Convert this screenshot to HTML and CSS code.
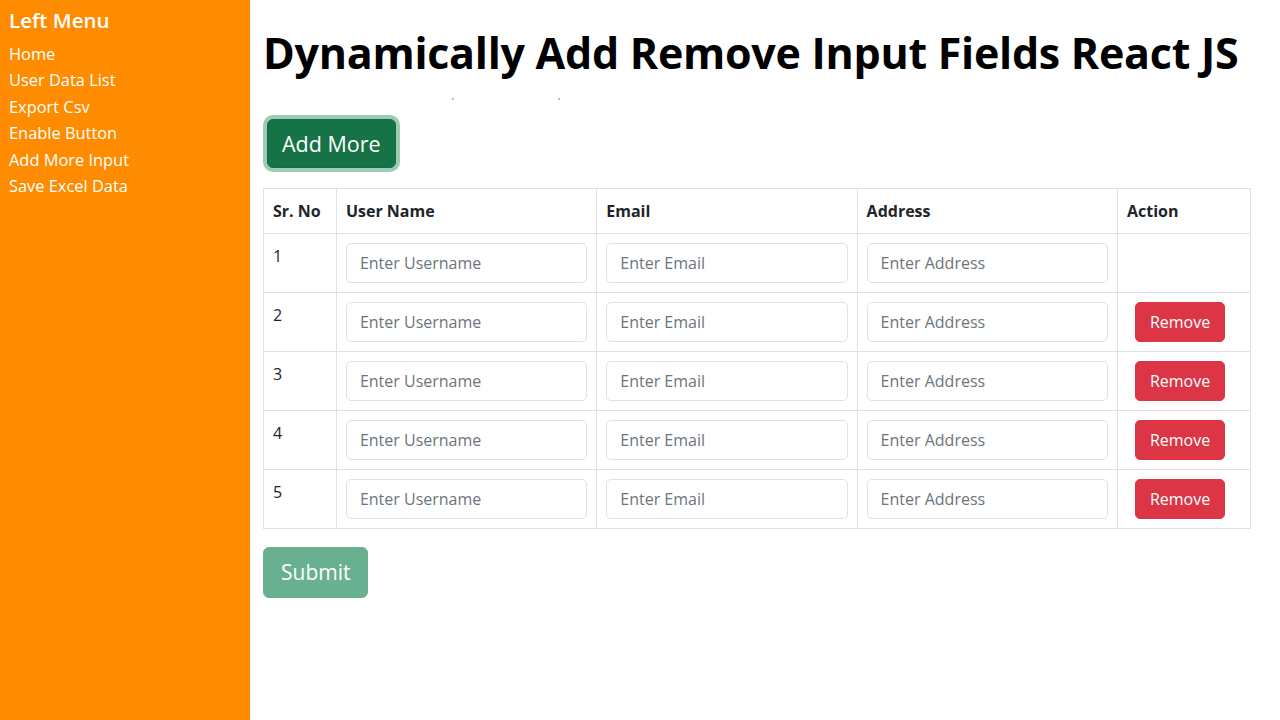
FILE: index.html
```html
<!DOCTYPE html>
<html lang="en">
<head>
<meta charset="utf-8">
<title>Dynamically Add Remove Input Fields React JS</title>
<link rel="stylesheet" href="styles.css">
</head>
<body>
<div class="app">
  <aside class="sidebar">
    <h3 class="side-title">Left Menu</h3>
    <ul class="side-menu">
      <li>Home</li>
      <li>User Data List</li>
      <li>Export Csv</li>
      <li>Enable Button</li>
      <li>Add More Input</li>
      <li>Save Excel Data</li>
    </ul>
  </aside>
  <main class="content">
    <h1 class="page-title">Dynamically Add Remove Input Fields React JS</h1>
    <div class="dots"><span class="dot"></span><span class="dot"></span></div>
    <div class="add-wrap"><button class="btn btn-add">Add More</button></div>
    <table class="grid">
      <thead>
        <tr><th class="c-no">Sr. No</th><th class="c-in">User Name</th><th class="c-in">Email</th><th class="c-in">Address</th><th class="c-act">Action</th></tr>
      </thead>
      <tbody>
        <tr><td>1</td><td><input class="field" placeholder="Enter Username"></td><td><input class="field" placeholder="Enter Email"></td><td><input class="field" placeholder="Enter Address"></td><td class="act"></td></tr>
        <tr><td>2</td><td><input class="field" placeholder="Enter Username"></td><td><input class="field" placeholder="Enter Email"></td><td><input class="field" placeholder="Enter Address"></td><td class="act"><button class="btn btn-remove">Remove</button></td></tr>
        <tr><td>3</td><td><input class="field" placeholder="Enter Username"></td><td><input class="field" placeholder="Enter Email"></td><td><input class="field" placeholder="Enter Address"></td><td class="act"><button class="btn btn-remove">Remove</button></td></tr>
        <tr><td>4</td><td><input class="field" placeholder="Enter Username"></td><td><input class="field" placeholder="Enter Email"></td><td><input class="field" placeholder="Enter Address"></td><td class="act"><button class="btn btn-remove">Remove</button></td></tr>
        <tr><td>5</td><td><input class="field" placeholder="Enter Username"></td><td><input class="field" placeholder="Enter Email"></td><td><input class="field" placeholder="Enter Address"></td><td class="act"><button class="btn btn-remove">Remove</button></td></tr>
      </tbody>
    </table>
    <button class="btn btn-submit" disabled>Submit</button>
  </main>
</div>
</body>
</html>
```
FILE: styles.css
```css
* { box-sizing: border-box; }
html, body { margin: 0; padding: 0; height: 100%; }
body {
  font-family: "Open Sans", "Noto Sans", sans-serif;
  color: #212529;
  background: #fff;
}
.app { display: flex; min-height: 720px; }
.sidebar {
  width: 250px;
  flex: 0 0 250px;
  background: #ff8c00;
  color: #fff;
  padding: 6px 9px;
}
.side-title {
  margin: 0 0 7px;
  font-size: 20.5px;
  font-weight: 600;
  line-height: 28px;
}
.side-menu { list-style: none; margin: 0; padding: 0; }
.side-menu li { font-size: 16.4px; line-height: 26.4px; }
.content { flex: 1; padding: 20px 29px 0 13px; }
.page-title {
  margin: 0;
  font-size: 43px;
  font-weight: 700;
  line-height: 66px;
  letter-spacing: -0.27px;
  color: #000;
}
.dots { height: 24px; position: relative; }
.dot { position: absolute; top: 12px; width: 2px; height: 2px; background: #bbb; }
.dot:first-child { left: 189px; }
.dot:last-child { left: 295px; }
.add-wrap { padding: 9px 0 20px; }
.btn {
  font-family: inherit;
  border: 1px solid transparent;
  color: #fff;
  cursor: pointer;
}
.btn-add {
  background: #157347;
  border-color: #146c43;
  font-size: 21.5px;
  line-height: 31px;
  padding: 8px 14px 8px;
  border-radius: 6px;
  box-shadow: 0 0 0 4px rgba(60,153,110,.5);
  margin-left: 4px;
  display: block;
}
.grid {
  width: 988px;
  border-collapse: collapse;
  margin-bottom: 18px;
}
.grid th, .grid td {
  border: 1px solid #dee2e6;
  text-align: left;
  vertical-align: top;
}
.grid th {
  font-size: 16px;
  font-weight: 700;
  padding: 10px 9px 10px;
  line-height: 24px;
  height: 45px;
}
.grid td { padding: 9px 9px 9px; font-size: 16px; line-height: 24px; height: 59px; }
.grid td:first-child { padding-top: 10px; }
.c-no { width: 73px; }
.c-in { width: 261px; }
.c-act { width: 133px; }
.field {
  display: block;
  width: 100%;
  height: 40px;
  border: 1px solid #dee2e6;
  border-radius: 5px;
  padding: 6px 13px;
  font-family: inherit;
  font-size: 16px;
  color: #212529;
  background: #fff;
}
.field::placeholder { color: #6c757d; }
.grid td.act { padding-left: 17px; }
.btn-remove {
  background: #dc3545;
  border-color: #dc3545;
  font-size: 16px;
  line-height: 24px;
  height: 40px;
  width: 90px;
  padding: 6px 12px;
  border-radius: 5px;
}
.btn-submit {
  background: #198754;
  border-color: #198754;
  opacity: .65;
  font-size: 21px;
  line-height: 31px;
  padding: 9px 17px 9px;
  border-radius: 6px;
  cursor: default;
}
```
